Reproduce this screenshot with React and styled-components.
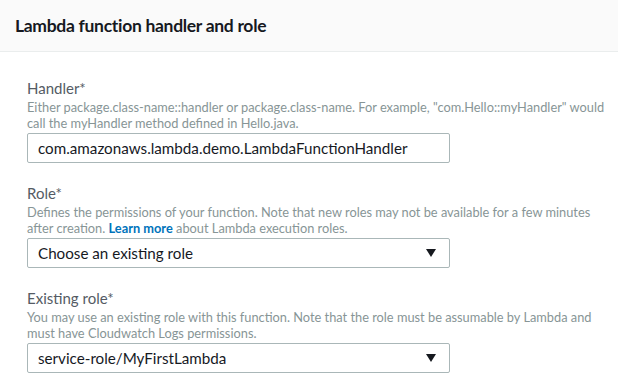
import React from "react";
import styled, { createGlobalStyle } from "styled-components";

const GlobalStyle = createGlobalStyle`
  body {
    margin: 0;
    background: #ffffff;
    font-family: Lato, "Liberation Sans", sans-serif;
  }
`;

const Panel = styled.div`
  width: 618px;
  height: 390px;
  overflow: hidden;
  background: #ffffff;
`;

const Header = styled.div`
  height: 52px;
  display: flex;
  align-items: center;
  padding: 0 15px;
  background: #fafafa;
  border-bottom: 1px solid #eaeded;
  box-sizing: border-box;
`;

const Title = styled.h2`
  margin: 0;
  font-size: 17.5px;
  font-weight: 700;
  color: #16191f;
  letter-spacing: -0.3px;
`;

const Body = styled.div`
  display: flex;
  flex-direction: column;
  gap: 20px;
  padding: 26px 27px 0;
`;

const Field = styled.div`
  display: flex;
  flex-direction: column;
`;

const Label = styled.label`
  font-size: 15px;
  line-height: 20px;
  color: #545b64;
  margin-bottom: 1px;
`;

const Desc = styled.div`
  font-size: 12.8px;
  line-height: 16px;
  color: #879596;
  margin-bottom: 2px;
  white-space: nowrap;
`;

const Link = styled.a`
  color: #0073bb;
  font-weight: 700;
  text-decoration: none;
`;

const Box = styled.div`
  width: 423px;
  height: 30px;
  box-sizing: border-box;
  border: 1px solid #aab7b8;
  border-radius: 2px;
  display: flex;
  align-items: center;
  justify-content: space-between;
  padding: 0 13px 0 10px;
  font-size: 15.2px;
  color: #16191f;
  cursor: ${({ $select }) => ($select ? "pointer" : "text")};
`;

const Arrow = styled.span`
  width: 0;
  height: 0;
  border-left: 5px solid transparent;
  border-right: 5px solid transparent;
  border-top: 8px solid #16191f;
`;

const fields = [
  {
    label: "Handler*",
    desc: (
      <>
        Either package.class-name::handler or package.class-name. For example, "com.Hello::myHandler" would
        <br />
        call the myHandler method defined in Hello.java.
      </>
    ),
    value: "com.amazonaws.lambda.demo.LambdaFunctionHandler",
  },
  {
    label: "Role*",
    desc: (
      <>
        Defines the permissions of your function. Note that new roles may not be available for a few minutes
        <br />
        after creation. <Link href="#">Learn more</Link> about Lambda execution roles.
      </>
    ),
    value: "Choose an existing role",
    select: true,
  },
  {
    label: "Existing role*",
    desc: (
      <>
        You may use an existing role with this function. Note that the role must be assumable by Lambda and
        <br />
        must have Cloudwatch Logs permissions.
      </>
    ),
    value: "service-role/MyFirstLambda",
    select: true,
  },
];

const App = () => {
  return (
    <>
      <GlobalStyle />
      <Panel>
        <Header>
          <Title>Lambda function handler and role</Title>
        </Header>
        <Body>
          {fields.map((f) => (
            <Field key={f.label}>
              <Label>{f.label}</Label>
              <Desc>{f.desc}</Desc>
              <Box $select={f.select}>
                <span>{f.value}</span>
                {f.select && <Arrow />}
              </Box>
            </Field>
          ))}
        </Body>
      </Panel>
    </>
  );
};

export default App;
